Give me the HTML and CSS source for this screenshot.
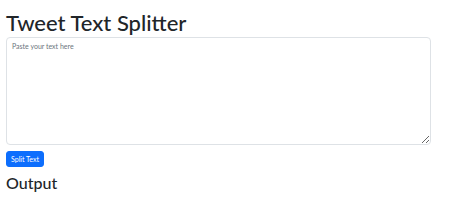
FILE: index.html
```html
<!DOCTYPE html>
<html>
<head>
<meta charset="utf-8">
<link rel="stylesheet" href="styles.css">
</head>
<body>
<div class="page">
  <h1 class="title">Tweet Text Splitter</h1>
  <textarea class="input" placeholder="Paste your text here"></textarea>
  <button class="btn">Split Text</button>
  <h2 class="subtitle">Output</h2>
</div>
</body>
</html>
```
FILE: styles.css
```css
html, body { margin: 0; padding: 0; background: #fff; }
.page {
  font-family: "Lato", "Noto Sans", sans-serif;
  color: #212529;
  padding: 9px 43px 0 6px;
  display: flex;
  flex-direction: column;
  align-items: flex-start;
}
.title {
  margin: 0;
  font-size: 22px;
  font-weight: 500;
  line-height: 27px;
}
.input {
  box-sizing: border-box;
  width: 425px;
  height: 108px;
  margin: 1px 0 0 0;
  padding: 4px 5px;
  border: 1px solid #dee2e6;
  border-radius: 4px;
  font-family: "Lato", "Noto Sans", sans-serif;
  font-size: 7px;
  color: #212529;
  resize: vertical;
}
.input::placeholder { color: #6c757d; }
.btn {
  margin-top: 6px;
  box-sizing: border-box;
  height: 16px;
  width: 38px;
  padding: 0;
  background: #0d6efd;
  color: #fff;
  border: 1px solid #0d6efd;
  border-radius: 3px;
  font-family: "Lato", "Noto Sans", sans-serif;
  font-size: 7px;
}
.subtitle {
  margin: 6px 0 0 0;
  font-size: 16px;
  font-weight: 500;
  line-height: 20px;
}
```
